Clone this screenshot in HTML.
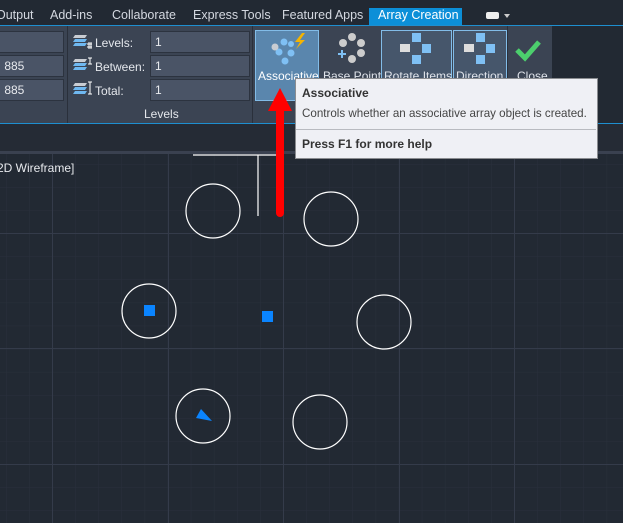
<!DOCTYPE html>
<html><head><style>
*{margin:0;padding:0;box-sizing:border-box}
body{width:623px;height:523px;overflow:hidden;background:#222933;font-family:"Liberation Sans",sans-serif;position:relative;font-size:12px}
.a{position:absolute}
.tab{position:absolute;top:8px;color:#d4d8e0;font-size:12.5px}
.fld{position:absolute;background:#4a5466;border:1px solid #2c333f;color:#e8eaee;font-size:12px;padding:3px 4px;height:22px}
.lbl{position:absolute;color:#e4e7ec;font-size:12px}
.bl{position:absolute;color:#dfe3ea;font-size:12px;top:69px}
</style></head><body>
<div class="a" style="left:0;top:0;width:623px;height:25px;background:#222933"></div>
<div class="tab" style="left:-4px">Output</div>
<div class="tab" style="left:50px">Add-ins</div>
<div class="tab" style="left:112px">Collaborate</div>
<div class="tab" style="left:193px">Express Tools</div>
<div class="tab" style="left:282px">Featured Apps</div>
<div class="a" style="left:369px;top:8px;width:93px;height:18px;background:#0c8fd8"></div>
<div class="tab" style="left:378px;color:#fff">Array Creation</div>
<div class="a" style="left:486px;top:12px;width:13px;height:7px;background:#eee;border-radius:2px"></div>
<div class="a" style="left:504px;top:14px;width:0;height:0;border-left:3px solid transparent;border-right:3px solid transparent;border-top:4px solid #ccc"></div>
<div class="a" style="left:0;top:25px;width:623px;height:1px;background:#1e8fd0"></div>
<div class="a" style="left:0;top:26px;width:552px;height:97px;background:#3b4453"></div>
<div class="a" style="left:67px;top:26px;width:1px;height:97px;background:#2a303b"></div>
<div class="a" style="left:252px;top:26px;width:1px;height:97px;background:#2a303b"></div>
<div class="a" style="left:507px;top:26px;width:1px;height:97px;background:#2a303b"></div>
<div class="a" style="left:0;top:123px;width:623px;height:1px;background:#1e8fd0"></div>
<div class="a" style="left:0;top:124px;width:623px;height:27px;background:#252b35"></div>
<div class="a" style="left:0;top:151px;width:623px;height:3px;background:#3a4150"></div>
<div class="fld" style="left:-4px;top:31px;width:68px"></div>
<div class="fld" style="left:-4px;top:55px;width:68px">&nbsp;885</div>
<div class="fld" style="left:-4px;top:79px;width:68px">&nbsp;885</div>
<svg class="a" style="left:72px;top:32px" width="22" height="72">
<g fill="#6fb8f0"><path d="M3 3h12l-2 3H1z" fill="#c8ccd2"/><path d="M3 7h12l-2 3H1z"/><path d="M3 11h12l-2 3H1z"/>
<path d="M3 27h12l-2 3H1z" fill="#c8ccd2"/><path d="M3 31h12l-2 3H1z"/><path d="M3 35h12l-2 3H1z"/>
<path d="M3 51h12l-2 3H1z" fill="#c8ccd2"/><path d="M3 55h12l-2 3H1z"/><path d="M3 59h12l-2 3H1z"/></g>
<g stroke="#fff" stroke-width="1" fill="none"><path d="M15 12h5M15 15h5M17 10v7M19 10v7"/><path d="M16 26h4M18 26v6M16 32h4"/><path d="M16 50h4M18 50v12M16 62h4"/></g>
</svg>
<div class="lbl" style="left:95px;top:36px">Levels:</div>
<div class="lbl" style="left:95px;top:60px">Between:</div>
<div class="lbl" style="left:95px;top:84px">Total:</div>
<div class="fld" style="left:150px;top:31px;width:100px">1</div>
<div class="fld" style="left:150px;top:55px;width:100px">1</div>
<div class="fld" style="left:150px;top:79px;width:100px">1</div>
<div class="lbl" style="left:144px;top:107px">Levels</div>
<div class="a" style="left:255px;top:30px;width:64px;height:71px;background:#5a86ad;border:1px solid #82bce8"></div>
<div class="a" style="left:381px;top:30px;width:71px;height:71px;background:#46566b;border:1px solid #82bce8"></div>
<div class="a" style="left:453px;top:30px;width:54px;height:71px;background:#46566b;border:1px solid #82bce8"></div>
<svg class="a" style="left:250px;top:28px" width="300" height="40">
<g fill="#7fc0f4"><circle cx="34" cy="14" r="3.5"/><circle cx="29" cy="24" r="3.5"/><circle cx="35" cy="33" r="3.5"/><circle cx="41" cy="25" r="3.5"/><circle cx="41" cy="16" r="3"/></g><circle cx="25" cy="19" r="3.5" fill="#c8ccd2"/>
<path d="M52 5l-7 9h5l-4 7 9-9h-5l5-7z" fill="#f5b400"/>
<g fill="#ccc"><circle cx="102" cy="9" r="4"/><circle cx="93" cy="15" r="4"/><circle cx="111" cy="15" r="4"/><circle cx="111" cy="25" r="4"/><circle cx="102" cy="31" r="4"/></g>
<path d="M88 26h8M92 22v8" stroke="#7fc0f4" stroke-width="2"/>
<g fill="#7fc0f4"><rect x="162" y="5" width="9" height="9"/><rect x="172" y="16" width="9" height="9"/><rect x="162" y="27" width="9" height="9"/>
<rect x="226" y="5" width="9" height="9"/><rect x="236" y="16" width="9" height="9"/><rect x="226" y="27" width="9" height="9"/></g>
<g fill="#ddd"><rect x="150" y="16" width="10" height="8"/><rect x="214" y="16" width="10" height="8"/></g>
<path d="M267 22l8 8 14-16" stroke="#4ccf6d" stroke-width="5" fill="none"/>
</svg>
<div class="bl" style="left:258px;color:#fff">Associative</div>
<div class="bl" style="left:323px">Base Point</div>
<div class="bl" style="left:384px">Rotate Items</div>
<div class="bl" style="left:456px">Direction</div>
<div class="bl" style="left:517px">Close</div>
<svg class="a" style="left:0;top:154px" width="623" height="369">
<defs><pattern id="m" x="6" y="10" width="23.1" height="23.1" patternUnits="userSpaceOnUse"><path d="M0 0V23.1M0 0H23.1" stroke="#29303c" stroke-width="1"/></pattern></defs>
<rect width="623" height="369" fill="url(#m)"/>
<g stroke="#343b4a" stroke-width="1"><path d="M52.5 0V369M168.5 0V369M283.5 0V369M399.5 0V369M514.5 0V369"/><path d="M0 79.5H623M0 194.5H623M0 310.5H623"/></g>
<g stroke="#fff" stroke-width="1.2" fill="none">
<circle cx="213" cy="57" r="27"/><circle cx="331" cy="65" r="27"/><circle cx="149" cy="157" r="27"/><circle cx="384" cy="168" r="27"/><circle cx="203" cy="262" r="27"/><circle cx="320" cy="268" r="27"/>
<path d="M193 1H278M258 1V62"/></g>
<rect x="144" y="151" width="11" height="11" fill="#0a84ff"/><rect x="262" y="157" width="11" height="11" fill="#0a84ff"/>
<path d="M196 264l5-9 11 12z" fill="#0a84ff"/>
</svg>
<div class="a" style="left:-3px;top:161px;color:#e8eaee;font-size:12px">2D Wireframe]</div>
<svg class="a" style="left:260px;top:85px" width="40" height="135">
<path d="M20 128V22" stroke="#f00" stroke-width="8" stroke-linecap="round"/>
<path d="M20 3L8 26h24z" fill="#f00"/>
</svg>
<div class="a" style="left:295px;top:78px;width:303px;height:81px;background:#eff0f5;border:1px solid #8a8c90"></div>
<div class="a" style="left:302px;top:86px;font-weight:bold;color:#333;font-size:12px">Associative</div>
<div class="a" style="left:302px;top:107px;color:#444;font-size:11.6px">Controls whether an associative array object is created.</div>
<div class="a" style="left:296px;top:129px;width:300px;height:1px;background:#b8bac0"></div>
<div class="a" style="left:302px;top:137px;font-weight:bold;color:#333;font-size:12px">Press F1 for more help</div>
</body></html>
